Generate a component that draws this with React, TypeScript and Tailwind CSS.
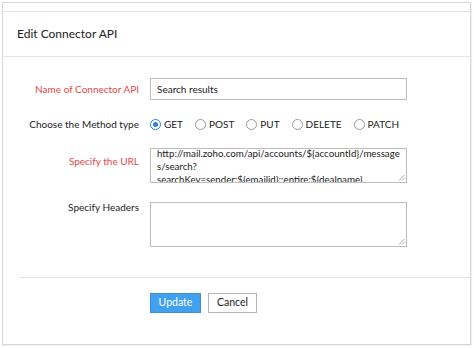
import React from "react";

const Grip = () => (
  <svg width="7" height="7" viewBox="0 0 7 7" className="absolute right-[1px] bottom-[1px]">
    <line x1="6.5" y1="1" x2="1" y2="6.5" stroke="#999" strokeWidth="0.8" />
    <line x1="6.5" y1="4" x2="4" y2="6.5" stroke="#999" strokeWidth="0.8" />
  </svg>
);

const Radio = ({ checked, label }: { checked?: boolean; label: string }) => (
  <div className="flex items-center gap-[3px]">
    <span
      className={
        "w-[11px] h-[11px] rounded-full border flex items-center justify-center bg-white " +
        (checked ? "border-[#2f7fd6]" : "border-[#9a9a9a]")
      }
    >
      {checked && <span className="w-[5px] h-[5px] rounded-full bg-[#2f7fd6]" />}
    </span>
    <span className="text-[10px] text-[#222]">{label}</span>
  </div>
);

export default function App() {
  return (
    <div className="w-[474px] h-[348px] bg-white pt-[2px] pl-[2px]" style={{ fontFamily: "Lato, 'Open Sans', sans-serif" }}>
      <div className="w-[469px] h-[343px] border border-[#d6d6d6] shadow-[1px_1px_1px_rgba(0,0,0,0.06)] bg-white flex flex-col">
        <div className="h-[9px] border-b border-[#e3e3e3]" />
        <div className="h-[45px] border-b border-[#e6e6e6] flex items-center pl-[14px]">
          <span className="text-[12px] text-[#222]">Edit Connector API</span>
        </div>
        <div className="flex flex-col pt-[21px]">
          <div className="flex items-center h-[22px]">
            <div className="w-[136px] text-right text-[10px] text-[#e0484a]">Name of Connector API</div>
            <div className="ml-[11px] w-[257px] h-[22px] border border-[#bdbdbd] flex items-center pl-[6px] text-[10px] text-[#222]">
              Search results
            </div>
          </div>
          <div className="flex items-center h-[22px] mt-[13px]">
            <div className="w-[136px] text-right text-[10px] text-[#222]">Choose the Method type</div>
            <div className="ml-[11px] flex items-center gap-[12px]">
              <Radio checked label="GET" />
              <Radio label="POST" />
              <Radio label="PUT" />
              <Radio label="DELETE" />
              <Radio label="PATCH" />
            </div>
          </div>
          <div className="flex items-start mt-[13px]">
            <div className="w-[136px] text-right text-[10px] text-[#e0484a] pt-[6px]">Specify the URL</div>
            <div className="relative ml-[11px] w-[257px] h-[35px] border border-[#bdbdbd] overflow-hidden pl-[6px] text-[9.7px] leading-[13px] text-[#222]">
              <div className="-mt-[2px]">
                <div className="whitespace-nowrap">http://mail.zoho.com/api/accounts/${"{accountId}"}/message</div>
                <div className="whitespace-nowrap">s/search?</div>
                <div className="whitespace-nowrap">searchKey=sender:${"{emailid}"}::entire:${"{dealname}"}</div>
              </div>
              <Grip />
            </div>
          </div>
          <div className="flex items-start mt-[19px]">
            <div className="w-[136px] text-right text-[10px] text-[#222] -mt-[2px]">Specify Headers</div>
            <div className="relative ml-[11px] w-[257px] h-[45px] border border-[#bdbdbd]">
              <Grip />
            </div>
          </div>
          <div className="ml-[17px] mt-[30px] border-t border-[#e3e3e3]" />
          <div className="flex items-center gap-[7px] ml-[147px] mt-[15px]">
            <button className="w-[51px] h-[20px] bg-[#42a1ee] border border-[#3a90d8] text-white text-[10.5px] flex items-center justify-center">
              Update
            </button>
            <button className="w-[49px] h-[20px] bg-white border border-[#b5b5b5] text-[#222] text-[10.5px] flex items-center justify-center">
              Cancel
            </button>
          </div>
        </div>
      </div>
    </div>
  );
}
